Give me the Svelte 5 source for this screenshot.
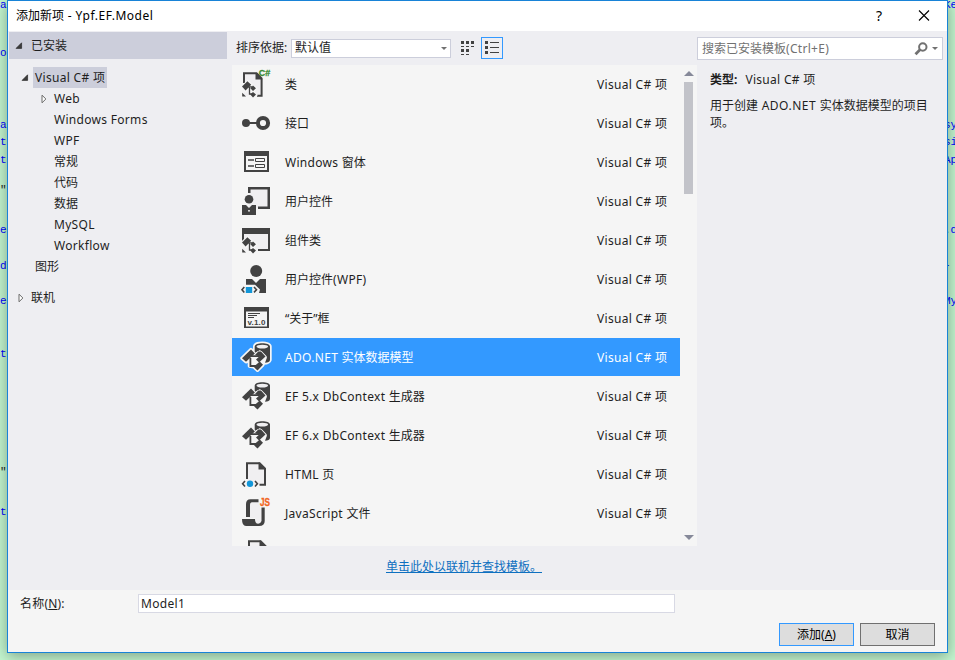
<script>
	const tree = [
		{ name: 'Visual C# 项', level: 1, arrow: 'open' },
		{ name: 'Web', level: 2, arrow: 'closed' },
		{ name: 'Windows Forms', level: 2 },
		{ name: 'WPF', level: 2 },
		{ name: '常规', level: 2 },
		{ name: '代码', level: 2 },
		{ name: '数据', level: 2 },
		{ name: 'MySQL', level: 2 },
		{ name: 'Workflow', level: 2 },
		{ name: '图形', level: 1 },
		{ name: '联机', level: 0, arrow: 'closed' }
	];

	const templates = [
		{ name: '类', icon: 'class' },
		{ name: '接口', icon: 'interface' },
		{ name: 'Windows 窗体', icon: 'form' },
		{ name: '用户控件', icon: 'control' },
		{ name: '组件类', icon: 'component' },
		{ name: '用户控件(WPF)', icon: 'wpf' },
		{ name: '“关于”框', icon: 'about' },
		{ name: 'ADO.NET 实体数据模型', icon: 'model' },
		{ name: 'EF 5.x DbContext 生成器', icon: 'model' },
		{ name: 'EF 6.x DbContext 生成器', icon: 'model' },
		{ name: 'HTML 页', icon: 'html' },
		{ name: 'JavaScript 文件', icon: 'js' },
		{ name: '', icon: 'page' }
	];

	// editor lines that stick out on both sides of the dialog, h = distance to the next one
	const leftCode = [
		{ t: 'a', h: 48 },
		{ t: 'o', h: 72 },
		{ t: 'a', h: 17 },
		{ t: 't', h: 18 },
		{ t: 't', h: 30 },
		{ t: '″', h: 40, dark: true },
		{ t: 'e', h: 36 },
		{ t: 'd', h: 35 },
		{ t: 'e', h: 53 },
		{ t: 't', h: 118 },
		{ t: '″', h: 40, dark: true },
		{ t: 't', h: 18 }
	];
	const rightCode = [
		{ t: 'Ke', h: 120 },
		{ t: 'sy', h: 17 },
		{ t: 'si', h: 18 },
		{ t: 'Ap', h: 70 },
		{ t: '.d', h: 35 },
		{ t: '-', h: 36 },
		{ t: 'My', h: 18 }
	];

	let selected = $state(7);
	let selectedNode = $state('Visual C# 项');
	let fileName = $state('Model1');

	// latin runs are set a bit wider than the chinese ones
	function split(text) {
		return text.match(/[\x20-\x7e]+|[^\x20-\x7e]+/g) || [];
	}
</script>

{#snippet mixed(text)}{#each split(text) as part}<span class:latin={part.charCodeAt(0) < 127}>{part}</span>{/each}{/snippet}

{#snippet nodes()}
	<g class="halo">
		<path d="M2.3 19 8 13.2 11.5 17 5.5 23Z" />
		<path d="M8 19.5H11V26H13" />
		<path d="M10 20.5 13 18 16 20.5 13 23Z" />
		<path d="M10 27 13 24.5 16 27 13 29.5Z" />
	</g>
	<path class="ink" d="M2 18.6 7.4 13.2 11.2 16.8 5.6 22.4Z" />
	<path class="line w13" d="M8 18.8H12M9.5 18.8V26H12.5" />
	<path class="ink" d="M10.3 20.3 13 17.6 16 20.3 13 23Z M10.3 26.6 13 23.9 16 26.6 13 29.5Z M2.2 24.8 6 28.6H2.2Z" />
{/snippet}

{#snippet icon(kind)}
	<svg class="icon" width="32" height="32" viewBox="0 0 32 32">
		{#if kind === 'class'}
			<path d="M4 5H16L22 11V28H4Z" fill="#f0eff1" />
			<path class="line" d="M4 15V5.2H16.5L21.6 10.5V27.8H17" />
			<path class="ink" d="M15.5 5V11.5H22.5L17.5 5Z" />
			{@render nodes()}
			<text x="18.8" y="8.3" class="cs" textLength="11.4" lengthAdjust="spacingAndGlyphs">C#</text>
		{:else if kind === 'interface'}
			<circle class="ink" cx="6" cy="16" r="4" />
			<path class="line" d="M9 16H18" />
			<circle class="line w4" cx="23" cy="16" r="5.1" />
		{:else if kind === 'form'}
			<path class="ink" d="M4 5H29V26H4ZM6 10V24H27V10Z" fill-rule="evenodd" />
			<path class="line w15" d="M8 14H14M8 20H14" />
			<path class="line w1" d="M15.5 12.5H24.5V15.5H15.5ZM15.5 18.5H24.5V21.5H15.5Z" />
		{:else if kind === 'control'}
			<path d="M9 3H29V23H9Z" fill="#f0eff1" />
			<path class="ink" d="M8 2H30V24H18V21.5H27.5V4.5H10.5V8H8Z" />
			<circle class="ink" cx="9" cy="14.2" r="4.3" />
			<path class="ink" d="M2 20H6L9 23 12 20H16V30H2Z" />
			<rect x="8.2" y="25" width="1.6" height="1.6" fill="#f5f5f5" />
		{:else if kind === 'component'}
			<path d="M3 5H29V26H3Z" fill="#f0eff1" />
			<path class="ink" d="M2 4H30V27H18V25H28V10H4V15L2 17Z" />
			{@render nodes()}
		{:else if kind === 'wpf'}
			<circle class="ink" cx="16.2" cy="8" r="6" />
			<path class="ink" d="M6 16H12L16 20 20 16H26V30H19L20 26.5 15 21.8H6Z" />
			<rect x="5.8" y="24" width="6.4" height="6" fill="#1296d8" />
			<path class="line w16" d="M4.3 24 2 26.7 4.3 29.4M14 24 16.5 26.7 14 29.4" />
		{:else if kind === 'about'}
			<path class="ink" d="M4 5H29V26H4ZM6 9.5V24.5H27V9.5Z" fill-rule="evenodd" />
			<path class="line w1" d="M8 11.5H20M8 13.5H17M8 15.5H14" />
			<text x="7.5" y="23.4" class="version" textLength="18">v.1.0</text>
		{:else if kind === 'model'}
			<path
				class="outline"
				d="M14.7 5.5C14.7 1 30 1 30 5.5V19Q29 22 24 22L22.8 24 17.5 29.3 13.8 25.8 9.4 25V18.5L6 20.8 2 17.2 11 8.6 14.7 11Z"
			/>
			<path class="ink" d="M14.7 5.5C14.7 1 30 1 30 5.5V19Q29.5 21.7 25 21.7L27 16.5 20 9 14.7 12Z" />
			<ellipse cx="22.3" cy="5.6" rx="5.8" ry="1.9" fill="#f0eff1" />
			<g class="halo">
				<path d="M3 17 11 9.4 14.2 12.4 6 20Z" />
				<path d="M10.4 17.5V25H15M11 15.2H17" />
				<path d="M15.6 14 18.8 11.2H21L25 15.4 19 20.9 16.6 18.5 19.5 15.4Z" />
				<path d="M14.3 25.6 19.8 21.3 22.3 23.7 17.5 28.6Z" />
			</g>
			<path class="ink" d="M2 17.2 11 8.6 14.9 12.4 6 20.8Z" />
			<path class="line w18" d="M10.4 17V25H16M11 15.2H19" />
			<path class="ink" d="M15 14 18.3 10.6H21L25.5 15.4 19 21.5 16 18.5 19.3 15.4Z" />
			<path class="ink" d="M13.6 25.8 19.8 20.6 23 23.7 17.5 29.5Z" />
		{:else if kind === 'html'}
			<path d="M7 5H19L25 11V27H7Z" fill="#f0eff1" />
			<path class="line" d="M7 21V5.2H19.5L25 10.7V26.8H19.5" />
			<path class="ink" d="M18.5 4.5V11.5H26V10.5L20 4.5Z" />
			<circle cx="10" cy="25.8" r="3.2" fill="#1296d8" />
			<path class="line w16" d="M5 23 2.6 25.8 5 28.6M15 23 17.4 25.8 15 28.6" />
		{:else if kind === 'js'}
			<path d="M9 5H20V12H23V27H17L15 21H9Z" fill="#f0eff1" />
			<path class="ink" d="M6 20V7Q6 2.3 10.5 2.3H18.5V5.2H12Q10 5.2 10 8V20Z" />
			<path class="ink" d="M2 22H15Q15 26.8 18.2 26.8 20.5 26.8 21.5 24V10.5H24.7V24Q24.7 29 19 29H6Q2 29 2 22Z" />
			<text x="20" y="9" class="script" textLength="10" lengthAdjust="spacingAndGlyphs">JS</text>
		{:else}
			<path d="M9 5H20L26 11V32H9Z" fill="#f0eff1" />
			<path class="line" d="M9 32V5.2H20.5L26 10.7V32" />
			<path class="ink" d="M19.5 4.5V11.5H27V10.5L21 4.5Z" />
		{/if}
	</svg>
{/snippet}

{#snippet arrow(kind)}
	{#if kind === 'open'}
		<svg class="arrow" width="8" height="10" viewBox="0 0 8 10"><path d="M6.6 1.8V7.4H1Z" fill="#3c3c3c" stroke="#1e1e1e" stroke-width=".6" /></svg>
	{:else if kind === 'closed'}
		<svg class="arrow" width="8" height="10" viewBox="0 0 8 10"><path d="M2 1.2V8.8L5.9 5Z" fill="#fff" stroke="#6a6a6a" /></svg>
	{:else}
		<span class="arrow"></span>
	{/if}
{/snippet}

{#snippet code(lines)}
	{#each lines as line}
		<div class:dark={line.dark} style="height: {line.h}px">{line.t}</div>
	{/each}
{/snippet}

<div class="screen">
	<div class="editor">{@render code(leftCode)}</div>

	<div class="dialog">
		<header>
			<span class="title">{@render mixed('添加新项 - Ypf.EF.Model')}</span>
			<span class="help">?</span>
			<svg width="12" height="12" viewBox="0 0 12 12"><path d="M1 .5 11 10.5M11 .5 1 10.5" stroke="#000" stroke-width="1.1" /></svg>
		</header>

		<div class="content">
			<nav>
				<div class="installed">{@render arrow('open')}已安装</div>
				<ul>
					{#each tree as node}
						<li class="level{node.level}">
							{@render arrow(node.arrow)}
							<button class="node" class:active={node.name === selectedNode} onclick={() => (selectedNode = node.name)}>{@render mixed(node.name)}</button>
						</li>
					{/each}
				</ul>
			</nav>

			<section class="middle">
				<div class="toolbar">
					<span class="label">排序依据:</span>
					<div class="select">默认值<i class="caret"></i></div>
					<svg class="view" width="14" height="15" viewBox="0 0 14 15" shape-rendering="crispEdges">
						<path d="M0 0H3V3H0ZM5 0H8V3H5ZM10 0H13V3H10ZM0 5H3V6H0ZM5 5H8V6H5ZM10 5H13V6H10ZM0 8H3V11H0ZM5 8H8V11H5ZM0 13H3V14H0ZM5 13H8V14H5Z" fill="#424242" />
					</svg>
					<div class="view-active">
						<svg width="14" height="14" viewBox="0 0 14 14" shape-rendering="crispEdges">
							<path d="M0 0H3V3H0ZM0 5H3V8H0ZM0 10H3V13H0ZM5 1H14V2H5ZM5 6H14V7H5ZM5 11H14V12H5Z" fill="#424242" />
						</svg>
					</div>
				</div>

				<div class="list">
					<div class="rows">
						{#each templates as template, i}
							<button class="row" class:selected={i === selected} onclick={() => (selected = i)}>
								{@render icon(template.icon)}
								<span class="name">{@render mixed(template.name)}</span>
								{#if template.name}<span class="lang">{@render mixed('Visual C# 项')}</span>{/if}
							</button>
						{/each}
					</div>
					<div class="scrollbar">
						<i class="up"></i>
						<div class="thumb"></div>
						<i class="down"></i>
					</div>
				</div>

				<div class="online"><a href="#online">单击此处以联机并查找模板。</a></div>
			</section>

			<aside>
				<div class="search">
					<span>{@render mixed('搜索已安装模板(Ctrl+E)')}</span>
					<svg width="14" height="14" viewBox="0 0 14 14"><circle cx="8.8" cy="5" r="3.7" fill="none" stroke="#717171" stroke-width="2" /><path d="M6.2 7.6 1.5 12.3" stroke="#717171" stroke-width="2.8" /></svg>
					<i class="caret"></i>
				</div>
				<div class="info">
					<p><b>类型:</b>{@render mixed('Visual C# 项')}</p>
					<p class="description">{@render mixed('用于创建 ADO.NET 实体数据模型的项目项。')}</p>
				</div>
			</aside>
		</div>

		<footer>
			<div class="field">
				<label for="name">名称(<u>N</u>):</label>
				<input id="name" class="latin" bind:value={fileName} />
			</div>
			<div class="buttons">
				<button class="add">添加(<u>A</u>)</button>
				<button>取消</button>
			</div>
		</footer>
	</div>

	<div class="editor right">{@render code(rightCode)}</div>
</div>

<style>
	:global(body) {
		margin: 0;
		overflow: hidden;
	}

	.screen {
		display: flex;
		width: 955px;
		height: 660px;
		overflow: hidden;
		background: #c3f6cf;
		font: 12px/18px 'Noto Sans', 'Noto Sans CJK SC', sans-serif;
		color: #1e1e1e;
	}

	button {
		font: inherit;
		color: inherit;
		border: none;
		background: none;
		padding: 0;
	}

	.latin {
		letter-spacing: 0.3px;
		white-space: pre-wrap;
	}

	.editor {
		width: 7px;
		margin-top: -4px;
		overflow: hidden;
		font: 11px/18px 'Liberation Mono', monospace;
		color: #00f;
	}
	.editor.right {
		text-indent: -4px;
	}
	.editor .dark {
		color: #222;
	}

	.dialog {
		box-sizing: border-box;
		position: relative;
		width: 941px;
		height: 653px;
		display: flex;
		flex-direction: column;
		border: 1px solid #1883d7;
		background: #eeeef2;
		box-shadow: 0 3px 14px rgba(0, 0, 0, 0.35);
	}

	header {
		height: 30px;
		display: flex;
		align-items: center;
		background: #fff;
		color: #000;
		padding: 0 17px 0 8px;
	}
	.title {
		flex: 1;
	}
	.title .latin,
	.name .latin {
		letter-spacing: 0.5px;
	}
	.name .latin {
		letter-spacing: 0.3px;
	}
	.help {
		font-size: 14px;
		margin-right: 36px;
	}

	.content {
		height: 559px;
		display: grid;
		grid-template-columns: 224px 465px 1fr;
	}

	nav {
		padding: 1px 5px 0 1px;
	}
	.installed {
		height: 27px;
		display: flex;
		align-items: center;
		padding-left: 6px;
		background: #cccedb;
	}
	.arrow {
		width: 8px;
		flex: none;
		margin-right: 8px;
	}
	ul {
		list-style: none;
		margin: 8px 0 0;
		padding: 0;
	}
	li {
		height: 21px;
		display: flex;
		align-items: center;
	}
	li .arrow {
		margin-right: 4px;
	}
	.node {
		height: 21px;
		padding: 0 2px;
	}
	.node.active {
		background: #cccedb;
	}
	.level0 {
		margin-top: 10px;
		padding-left: 8px;
	}
	.level1 {
		padding-left: 12px;
	}
	.level2 {
		padding-left: 31px;
	}

	.toolbar {
		height: 34px;
		display: flex;
		align-items: center;
		padding-left: 4px;
	}
	.label {
		width: 55px;
		white-space: nowrap;
	}
	.select {
		box-sizing: border-box;
		width: 160px;
		height: 19px;
		display: flex;
		align-items: center;
		justify-content: space-between;
		padding: 0 3px;
		border: 1px solid #cccedb;
		background: #fff;
	}
	.caret {
		border: 3px solid transparent;
		border-top-color: #717171;
		border-bottom: 0;
	}
	.view {
		margin: 0 6px 0 10px;
	}
	.view-active {
		box-sizing: border-box;
		width: 22px;
		height: 22px;
		display: flex;
		align-items: center;
		justify-content: center;
		border: 1px solid #39f;
	}

	.list {
		height: 481px;
		display: flex;
		overflow: hidden;
		background: #f5f5f5;
	}
	.rows {
		width: 448px;
	}
	.row {
		box-sizing: border-box;
		width: 448px;
		height: 38px;
		margin-bottom: 1px;
		display: flex;
		align-items: center;
		padding: 0 13px 0 8px;
		text-align: left;
	}
	.row.selected {
		background: #39f;
		color: #fff;
	}
	.icon {
		margin-right: 13px;
	}
	.name {
		flex: 1;
	}
	.name,
	.lang {
		padding-top: 2px;
	}

	.ink {
		fill: #424242;
	}
	.line {
		fill: none;
		stroke: #424242;
		stroke-width: 2;
	}
	.w1 {
		stroke-width: 1;
	}
	.w13 {
		stroke-width: 1.3;
	}
	.w15 {
		stroke-width: 1.5;
	}
	.w16 {
		stroke-width: 1.6;
	}
	.w18 {
		stroke-width: 1.8;
	}
	.w4 {
		stroke-width: 4;
	}
	.halo {
		stroke: #f5f5f5;
		stroke-width: 2.6;
		fill: #f5f5f5;
	}
	.outline {
		fill: #f5f5f5;
		stroke: #f5f5f5;
		stroke-width: 3.4;
		stroke-linejoin: round;
	}
	.cs {
		font: bold 9px 'Liberation Sans', sans-serif;
		fill: #388a34;
		stroke: #388a34;
		stroke-width: 0.3;
	}
	.script {
		font: bold 10px 'Liberation Sans', sans-serif;
		fill: #f16421;
		stroke: #f16421;
		stroke-width: 0.3;
	}
	.version {
		font: bold 8px 'Liberation Sans', sans-serif;
		fill: #424242;
	}

	.scrollbar {
		width: 17px;
		display: flex;
		flex-direction: column;
		align-items: center;
		padding: 6px 0;
		box-sizing: border-box;
	}
	.up,
	.down {
		border: 5px solid transparent;
	}
	.up {
		border-bottom-color: #868999;
		border-top: 0;
	}
	.down {
		border-top-color: #868999;
		border-bottom: 0;
		margin-top: auto;
	}
	.thumb {
		width: 9px;
		height: 112px;
		margin-top: 6px;
		background: #c2c3c9;
	}

	.online {
		padding-top: 12px;
		padding-right: 1px;
		text-align: center;
	}
	.online a {
		color: #0e70c0;
	}

	aside {
		padding: 6px 4px 0 0;
	}
	.search {
		box-sizing: border-box;
		height: 23px;
		display: flex;
		align-items: center;
		padding: 0 4px;
		border: 1px solid #cccedb;
		background: #fff;
		color: #717171;
	}
	.search span:first-child {
		flex: 1;
	}
	.search svg {
		margin-right: 4px;
	}
	.info {
		padding: 11px 11px 0 13px;
	}
	p {
		margin: 0;
	}
	.info b {
		margin-right: 8px;
	}
	.description {
		margin-top: 8px;
		line-height: 17px;
	}
	.description .latin {
		letter-spacing: 0.5px;
	}

	footer {
		flex: 1;
		background: #f5f5f5;
	}
	.field {
		display: flex;
		align-items: center;
		padding: 4px 0 0 12px;
	}
	.field label {
		width: 118px;
		letter-spacing: 0.2px;
	}
	input {
		box-sizing: border-box;
		width: 537px;
		height: 19px;
		padding: 0 2px;
		border: 1px solid #d8d9e4;
		font: inherit;
		color: inherit;
		outline: none;
	}
	.buttons {
		display: flex;
		justify-content: flex-end;
		gap: 6px;
		padding: 10px 12px 0 0;
	}
	.buttons button {
		width: 75px;
		height: 23px;
		border: 1px solid #707070;
		background: #ddd;
		color: #000;
	}
	.buttons .add {
		border-color: #39f;
	}
</style>
